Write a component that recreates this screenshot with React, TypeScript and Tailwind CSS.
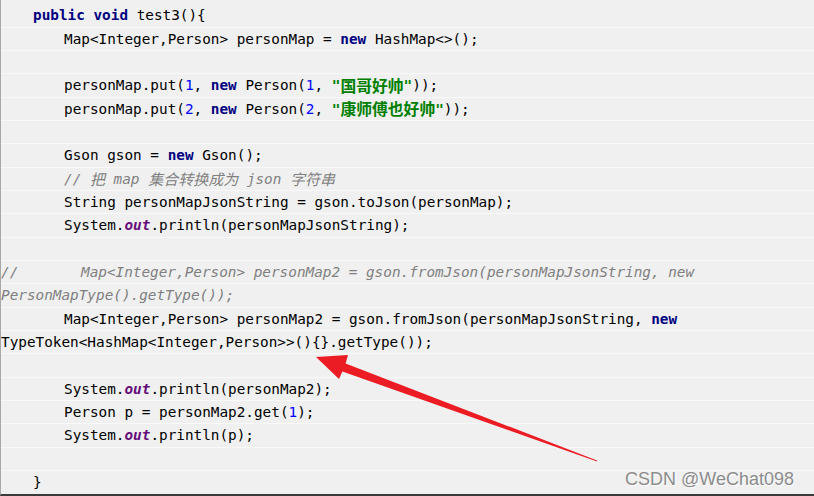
type Kind = "p" | "k" | "n" | "s" | "sc" | "c" | "cc" | "o";
type Tok = [Kind, string];

const KIND_CLASS: Record<Kind, string> = {
  p: "text-black",
  k: "font-bold text-[#000080]",
  n: "text-[#0000ff]",
  s: "font-bold text-[#008000]",
  sc: "font-bold text-[#008000] font-['Noto_Sans_CJK_SC',sans-serif] text-[15.8px]",
  c: "italic text-[#808080]",
  cc: "italic text-[#808080] font-['Noto_Sans_CJK_SC',sans-serif] text-[15px]",
  o: "font-bold italic text-[#660e7a]",
};

// each line: left offset in px, then the tokens
const LINES: { x: number; toks: Tok[]; lead?: string }[] = [
  { x: 32, toks: [["k", "public"], ["p", " "], ["k", "void"], ["p", " test3(){"]] },
  { x: 63, toks: [["p", "Map<Integer,Person> personMap = "], ["k", "new"], ["p", " HashMap<>();"]] },
  { x: 63, toks: [] },
  {
    x: 63,
    toks: [
      ["p", "personMap.put("], ["n", "1"], ["p", ", "], ["k", "new"], ["p", " Person("], ["n", "1"], ["p", ", "],
      ["s", "\""], ["sc", "国哥好帅"], ["s", "\""], ["p", "));"],
    ],
  },
  {
    x: 63,
    toks: [
      ["p", "personMap.put("], ["n", "2"], ["p", ", "], ["k", "new"], ["p", " Person("], ["n", "2"], ["p", ", "],
      ["s", "\""], ["sc", "康师傅也好帅"], ["s", "\""], ["p", "));"],
    ],
  },
  { x: 63, toks: [] },
  { x: 63, toks: [["p", "Gson gson = "], ["k", "new"], ["p", " Gson();"]] },
  {
    x: 63,
    toks: [["c", "// "], ["cc", "把"], ["c", " map "], ["cc", "集合转换成为"], ["c", " json "], ["cc", "字符串"]],
  },
  { x: 63, toks: [["p", "String personMapJsonString = gson.toJson(personMap);"]] },
  { x: 63, toks: [["p", "System."], ["o", "out"], ["p", ".println(personMapJsonString);"]] },
  { x: 63, toks: [] },
  {
    x: 0,
    lead: "//",
    toks: [["c", "Map<Integer,Person> personMap2 = gson.fromJson(personMapJsonString, new"]],
  },
  { x: 0, toks: [["c", "PersonMapType().getType());"]] },
  {
    x: 63,
    toks: [["p", "Map<Integer,Person> personMap2 = gson.fromJson(personMapJsonString, "], ["k", "new"]],
  },
  { x: 0, toks: [["p", "TypeToken<HashMap<Integer,Person>>(){}.getType());"]] },
  { x: 63, toks: [] },
  { x: 63, toks: [["p", "System."], ["o", "out"], ["p", ".println(personMap2);"]] },
  { x: 63, toks: [["p", "Person p = personMap2.get("], ["n", "1"], ["p", ");"]] },
  { x: 63, toks: [["p", "System."], ["o", "out"], ["p", ".println(p);"]] },
  { x: 63, toks: [] },
  { x: 32, toks: [["p", "}"]] },
];

function CodeLine({ x, toks, lead }: { x: number; toks: Tok[]; lead?: string }) {
  return (
    <div
      className="flex h-[23.35px] items-center whitespace-pre border-b border-[#f9f9f9]"
      style={{ paddingLeft: x }}
    >
      {lead && <span className="inline-block w-[80px] italic text-[#808080]">{lead}</span>}
      {toks.map(([k, t], i) => (
        <span key={i} className={KIND_CLASS[k]}>
          {t}
        </span>
      ))}
    </div>
  );
}

function Arrow() {
  return (
    <svg className="pointer-events-none absolute inset-0" width="814" height="496" viewBox="0 0 814 496">
      <polygon
        points="315,357 347,355 344.6,363.4 596,460.5 596,461.5 341.4,371.6 338,379"
        fill="#ec1c24"
      />
    </svg>
  );
}

export default function App() {
  return (
    <div className="relative h-[496px] w-[814px] overflow-hidden border-l border-b-2 border-l-[#a8a8a8] border-b-[#3a3a3a] bg-[#f0f0f0]">
      <div className="pt-[4.3px] font-['DejaVu_Sans_Mono',monospace] text-[14.35px] leading-none">
        {LINES.map((l, i) => (
          <CodeLine key={i} {...l} />
        ))}
      </div>
      <Arrow />
      <div className="absolute left-[624px] top-[470px] font-['Liberation_Sans',Arial,sans-serif] text-[18px] leading-none text-[#8c8c8c] [text-shadow:1px_1px_1px_#ffffff]">
        CSDN @WeChat098
      </div>
    </div>
  );
}
